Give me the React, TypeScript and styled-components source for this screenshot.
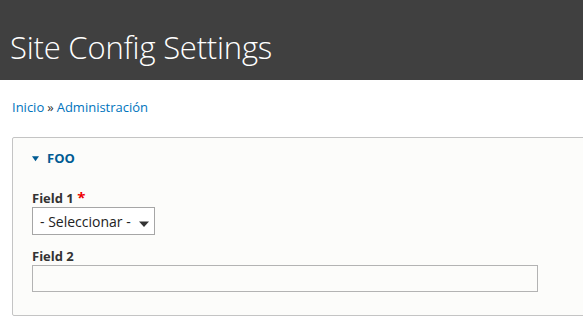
import React from "react";
import styled, { createGlobalStyle } from "styled-components";

const GlobalStyle = createGlobalStyle`
  html, body {
    margin: 0;
    padding: 0;
    overflow: hidden;
    background: #fff;
    font-family: "Open Sans", "Liberation Sans", sans-serif;
    color: #333;
  }
`;

export default function App() {
  return (
    <>
      <GlobalStyle />
      <Header>
        <Title>Site Config Settings</Title>
      </Header>
      <Main>
        <Breadcrumb>
          <Crumb href="#">Inicio</Crumb>
          <Sep>»</Sep>
          <Crumb href="#">Administración</Crumb>
        </Breadcrumb>
        <Details open>
          <Summary>
            <Caret viewBox="0 0 8 8" aria-hidden>
              <path d="M0 1.5 H8 L4 7 Z" fill="currentColor" />
            </Caret>
            FOO
          </Summary>
          <FieldItem>
            <Label>
              Field 1 <Required>*</Required>
            </Label>
            <SelectBox>
              <span>- Seleccionar -</span>
              <Arrow viewBox="0 0 10 8" aria-hidden>
                <path d="M0 1.5 H10 L5 7 Z" fill="#333" />
              </Arrow>
            </SelectBox>
          </FieldItem>
          <FieldItem>
            <Label>Field 2</Label>
            <TextInput type="text" />
          </FieldItem>
        </Details>
      </Main>
    </>
  );
}

const Header = styled.header`
  background: #404040;
  height: 80px;
  padding: 0 10px;
  display: flex;
  align-items: center;
  box-sizing: border-box;
`;

const Title = styled.h1`
  margin: 0;
  padding-top: 14px;
  font-weight: 300;
  font-size: 31px;
  color: #fff;
  letter-spacing: -0.2px;
`;

const Main = styled.main`
  padding: 18px 0 0 12px;
  width: 620px;
`;

const Breadcrumb = styled.nav`
  font-size: 13px;
  line-height: 18px;
  display: flex;
  gap: 3px;
  margin-bottom: 21px;
`;

const Crumb = styled.a`
  color: #0074bd;
  text-decoration: none;
`;

const Sep = styled.span`
  color: #333;
`;

const Details = styled.details`
  border: 1px solid #c4c4c4;
  border-radius: 2px;
  background: #fcfcfa;
  padding: 0 0 23px 19px;
  box-sizing: border-box;
`;

const Summary = styled.summary`
  list-style: none;
  display: flex;
  align-items: center;
  gap: 8px;
  color: #005b93;
  font-weight: 700;
  font-size: 13px;
  text-transform: uppercase;
  padding: 11px 0 0 0;
  height: 18px;
  margin-bottom: 21px;
  cursor: pointer;
  &::-webkit-details-marker {
    display: none;
  }
`;

const Caret = styled.svg`
  width: 7px;
  height: 7px;
`;

const FieldItem = styled.div`
  display: flex;
  flex-direction: column;
  align-items: flex-start;
  margin-bottom: 12px;
  &:last-child {
    margin-bottom: 0;
  }
`;

const Label = styled.label`
  font-size: 13px;
  font-weight: 700;
  line-height: 18px;
  color: #333;
`;

const Required = styled.span`
  color: #e00;
  font-size: 15px;
`;

const SelectBox = styled.div`
  display: flex;
  align-items: center;
  gap: 8px;
  height: 28px;
  box-sizing: border-box;
  border: 1px solid #a6a6a6;
  background: #fff;
  padding: 0 5px 0 7px;
  font-size: 14px;
  color: #222;
`;

const Arrow = styled.svg`
  width: 10px;
  height: 8px;
  margin-top: 6px;
`;

const TextInput = styled.input`
  width: 506px;
  height: 27px;
  box-sizing: border-box;
  border: 1px solid #b3b3b3;
  background: #fcfcfa;
  margin: 0;
  padding: 0 6px;
  font-family: inherit;
  font-size: 14px;
`;
